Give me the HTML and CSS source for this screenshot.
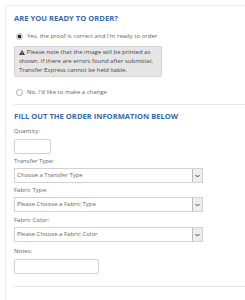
FILE: index.html
```html
<!DOCTYPE html>
<html>
<head>
<meta charset="utf-8">
<link rel="stylesheet" href="styles.css">
</head>
<body>
<div class="card">
  <h2 class="heading">ARE YOU READY TO ORDER?</h2>
  <div class="radio-row first"><span class="radio checked"></span><span>Yes, the proof is correct and I'm ready to order</span></div>
  <div class="notice"><svg class="warn" width="6" height="5" viewBox="0 0 6 5"><path d="M3 0 L6 5 L0 5 Z" fill="#333"/><rect x="2.6" y="1.6" width="0.8" height="1.8" fill="#e6e6e6"/><rect x="2.6" y="3.9" width="0.8" height="0.7" fill="#e6e6e6"/></svg> Please note that the image will be printed as shown. If there are errors found after submittal, Transfer Express cannot be held liable.</div>
  <div class="radio-row second"><span class="radio"></span><span>No, I'd like to make a change</span></div>
  <div class="rule r1"></div>
  <h2 class="heading h2b">FILL OUT THE ORDER INFORMATION BELOW</h2>
  <div class="label l-qty">Quantity:</div>
  <div class="input qty"></div>
  <div class="label">Transfer Type:</div>
  <div class="select"><span class="sel-text">Choose a Transfer Type</span><span class="arrow"><svg width="5" height="4" viewBox="0 0 5 4"><path d="M0.5 1 L2.5 3 L4.5 1" fill="none" stroke="#444" stroke-width="1"/></svg></span></div>
  <div class="label">Fabric Type:</div>
  <div class="select"><span class="sel-text">Please Choose a Fabric Type</span><span class="arrow"><svg width="5" height="4" viewBox="0 0 5 4"><path d="M0.5 1 L2.5 3 L4.5 1" fill="none" stroke="#444" stroke-width="1"/></svg></span></div>
  <div class="label l-color">Fabric Color:</div>
  <div class="select"><span class="sel-text">Please Choose a Fabric Color</span><span class="arrow"><svg width="5" height="4" viewBox="0 0 5 4"><path d="M0.5 1 L2.5 3 L4.5 1" fill="none" stroke="#444" stroke-width="1"/></svg></span></div>
  <div class="label l-notes">Notes:</div>
  <div class="input notes"></div>
  <div class="rule r2"></div>
</div>
</body>
</html>
```
FILE: styles.css
```css
html, body {
  margin: 0;
  padding: 0;
  background: #fff;
  overflow: hidden;
}
body {
  width: 245px;
  height: 300px;
  padding: 5px 0 0 5px;
  box-sizing: border-box;
  font-family: "Open Sans", "DejaVu Sans", sans-serif;
  color: #666;
}
.card {
  width: 240px;
  height: 295px;
  border: 1px solid #ececec;
  border-right: none;
  border-bottom: none;
  box-sizing: border-box;
  padding: 7px 0 0 8px;
}
.heading {
  margin: 0;
  font-size: 7.6px;
  line-height: 10px;
  height: 10px;
  font-weight: 700;
  color: #3a6aa6;
  white-space: nowrap;
}
.h2b {
  margin-top: 6px;
}
.radio-row {
  display: flex;
  align-items: center;
  gap: 4px;
  font-size: 6px;
  line-height: 9px;
  height: 9px;
  padding-left: 2px;
  color: #666;
  white-space: nowrap;
}
.first { margin-top: 9px; }
.second { margin-top: 11px; }
.radio {
  width: 5px;
  height: 5px;
  border: 1px solid #aaa;
  border-radius: 50%;
  background: #fff;
  box-sizing: content-box;
}
.radio.checked {
  background: radial-gradient(circle, #222 0 1.6px, #ddd 2px);
  border-color: #bbb;
}
.notice {
  margin-top: 5px;
  width: 148px;
  box-sizing: border-box;
  background: #e6e6e6;
  border: 1px solid #d6d6d6;
  border-radius: 2px;
  padding: 1px 4px;
  font-size: 6px;
  line-height: 9px;
  color: #444;
}
.warn {
  vertical-align: -0.5px;
}
.rule {
  height: 1px;
  background: #e6e6e6;
}
.r1 { margin-top: 7px; }
.r2 { margin-top: 12px; }
.label {
  margin-top: 3px;
  font-size: 6px;
  line-height: 9px;
  height: 9px;
  color: #666;
}
.l-qty { margin-top: 6px; }
.l-color { margin-top: 4px; }
.l-notes { margin-top: 5px; }
.input {
  margin-top: 3px;
  height: 15px;
  box-sizing: border-box;
  border: 1px solid #d2d2d2;
  border-radius: 2px;
  background: #fff;
}
.qty { width: 37px; }
.notes { width: 85px; }
.select {
  margin-top: 2px;
  width: 189px;
  height: 15px;
  box-sizing: border-box;
  border: 1px solid #d2d2d2;
  display: flex;
  align-items: stretch;
  justify-content: space-between;
  background: #fff;
}
.sel-text {
  font-size: 6px;
  line-height: 13px;
  padding-left: 2px;
  color: #666;
}
.arrow {
  width: 9px;
  border-left: 1px solid #bbb;
  background: #eee;
  display: flex;
  align-items: center;
  justify-content: center;
}
```
